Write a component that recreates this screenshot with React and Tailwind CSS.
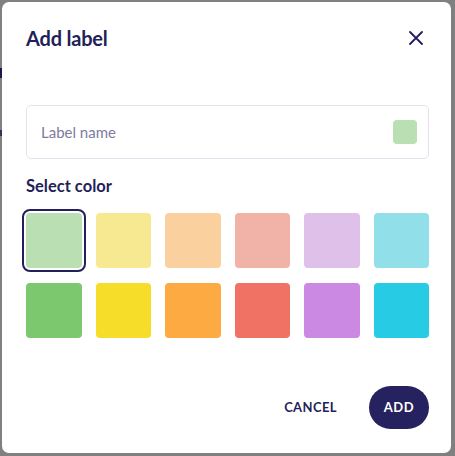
import React, { useState } from "react";

const COLORS = [
  "#b9dfb3",
  "#f6e991",
  "#fbd09f",
  "#f1b2a8",
  "#dfc0e9",
  "#91dfe8",
  "#7cc86e",
  "#f6dd2a",
  "#fdaa42",
  "#ef7264",
  "#cb89e4",
  "#27cce4",
];

function AddLabelModal() {
  const [selected, setSelected] = useState(COLORS[0]);
  const [name, setName] = useState("");

  return (
    <div className="w-[449px] h-[451px] bg-white rounded-[7px] pl-6 pr-[22px] pt-[21px] flex flex-col">
      {/* Header */}
      <div className="flex items-center justify-between h-[30px]">
        <h2 className="text-[20px] font-bold text-[#221f5a] tracking-[-0.2px]">Add label</h2>
        <button className="mr-[6px] text-[#221f5a]" aria-label="Close">
          <svg width="14" height="14" viewBox="0 0 14 14" fill="none">
            <path d="M1 1L13 13M13 1L1 13" stroke="currentColor" strokeWidth="1.8" strokeLinecap="round" />
          </svg>
        </button>
      </div>

      {/* Name input */}
      <div className="mt-[52px] h-[54px] border border-[#e3e2ee] rounded-[5px] flex items-center pl-[14px] pr-[11px]">
        <input
          value={name}
          onChange={(e) => setName(e.target.value)}
          placeholder="Label name"
          className="flex-1 outline-none text-[15px] text-[#221f5a] placeholder:text-[#7d7c9e]"
        />
        <span className="w-6 h-6 rounded-[4px]" style={{ backgroundColor: selected }} />
      </div>

      <h3 className="mt-[15px] text-[16.5px] font-bold text-[#221f5a]">Select color</h3>

      {/* Swatches */}
      <div className="mt-[14px] grid grid-cols-6 gap-x-[14px] gap-y-[15px]">
        {COLORS.map((c) => (
          <button
            key={c}
            onClick={() => setSelected(c)}
            className={
              "h-[55px] rounded-[4px] " +
              (selected === c ? "outline-2 outline-offset-2 outline-[#221f5a]" : "")
            }
            style={{ backgroundColor: c }}
          />
        ))}
      </div>

      {/* Actions */}
      <div className="mt-[48px] flex items-center justify-end gap-[32px]">
        <button className="text-[13px] font-bold tracking-[0.4px] text-[#221f5a]">CANCEL</button>
        <button className="h-[43px] w-[60px] rounded-full bg-[#26215f] text-white text-[13px] font-bold tracking-[0.6px]">
          ADD
        </button>
      </div>
    </div>
  );
}

export default function App() {
  return (
    <div className="relative w-[455px] h-[456px] bg-[#808080] p-[2px] font-['Lato',sans-serif]">
      {/* bits of the page behind the backdrop */}
      <span className="absolute left-0 top-[68px] w-[2px] h-[10px] bg-[#1a1a4a]" />
      <span className="absolute left-0 top-[130px] w-[2px] h-[6px] bg-[#33335a]" />
      <AddLabelModal />
    </div>
  );
}
